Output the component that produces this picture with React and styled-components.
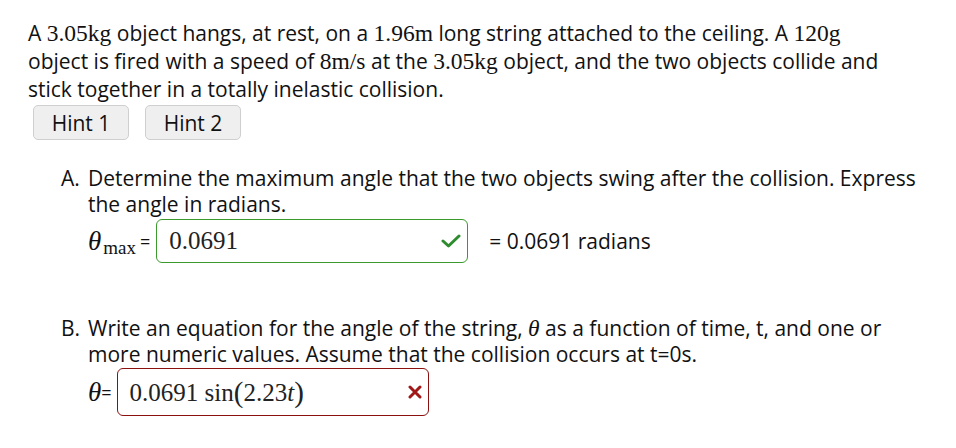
import React from "react";
import styled, { createGlobalStyle } from "styled-components";

const GlobalStyle = createGlobalStyle`
  body {
    margin: 0;
    background: #ffffff;
    color: #111;
    font-family: "Open Sans", "Liberation Sans", sans-serif;
  }
`;

const Page = styled.div`
  padding: 19px 28px 0 28px;
  width: 900px;
`;

const Problem = styled.p`
  margin: 0;
  width: 875px;
  font-size: 21px;
  line-height: 28px;
`;

const M = styled.span`
  font-family: "Liberation Serif", "DejaVu Serif", serif;
  font-size: 23.5px;
  font-style: ${(p) => (p.$italic ? "italic" : "normal")};
`;

const HintRow = styled.div`
  display: flex;
  gap: 16px;
  margin: 2px 0 0 5px;
`;

const HintButton = styled.button`
  width: 96px;
  height: 35px;
  background: #efefef;
  border: 1px solid #cfcfcf;
  border-radius: 5px;
  font-family: "Open Sans", "Liberation Sans", sans-serif;
  font-size: 21px;
  color: #111;
  padding: 0;
`;

const Part = styled.div`
  display: flex;
  margin: ${(p) => p.$top}px 0 0 33px;
  font-size: 21px;
  line-height: 26px;
`;

const PartLabel = styled.div`
  width: 27px;
  flex-shrink: 0;
`;

const PartBody = styled.div`
  flex: 1;
`;

const AnswerRow = styled.div`
  display: flex;
  align-items: center;
  margin-top: ${(p) => p.$top}px;
`;

const Theta = styled.span`
  font-family: "Liberation Serif", "DejaVu Serif", serif;
  font-style: italic;
  font-size: 27px;
  line-height: 1;
`;

const Sub = styled.span`
  font-family: "Liberation Serif", "DejaVu Serif", serif;
  font-size: 19px;
  position: relative;
  top: 7px;
  margin-left: 2px;
`;

const Eq = styled.span`
  font-size: 18px;
  margin: 0 ${(p) => p.$right}px 0 ${(p) => p.$left}px;
`;

const AnswerBox = styled.div`
  display: flex;
  align-items: center;
  justify-content: space-between;
  box-sizing: border-box;
  width: ${(p) => p.$w}px;
  height: ${(p) => p.$h}px;
  border: 1px solid ${(p) => p.$color};
  border-radius: 6px;
  padding: 0 6px 0 12px;
`;

const BoxValue = styled.span`
  font-family: "Liberation Serif", "DejaVu Serif", serif;
  font-size: 25px;
  color: #222;
`;

const Paren = styled.span`
  font-size: 29px;
  position: relative;
  top: 1px;
`;

const Units = styled.span`
  margin-left: 21px;
  font-size: 21px;
`;

function Check() {
  return (
    <svg width="20" height="14" viewBox="0 0 20 14">
      <path d="M2 7 L7.5 12 L18 2" fill="none" stroke="#2e8b2e" strokeWidth="3" strokeLinecap="round" strokeLinejoin="round" />
    </svg>
  );
}

function Cross() {
  return (
    <svg width="14" height="14" viewBox="0 0 14 14">
      <path d="M2 2 L12 12 M12 2 L2 12" stroke="#a01818" strokeWidth="3" strokeLinecap="round" />
    </svg>
  );
}

export default function App() {
  return (
    <Page>
      <GlobalStyle />
      <Problem>
        A <M>3.05kg</M> object hangs, at rest, on a <M>1.96m</M> long string attached to the
        ceiling. A <M>120g</M> object is fired with a speed of <M>8m/s</M> at the{" "}
        <M>3.05kg</M> object, and the two objects collide and stick together in a totally
        inelastic collision.
      </Problem>
      <HintRow>
        <HintButton>Hint 1</HintButton>
        <HintButton>Hint 2</HintButton>
      </HintRow>

      <Part $top={25}>
        <PartLabel>A.</PartLabel>
        <PartBody>
          Determine the maximum angle that the two objects swing after the collision.
          Express the angle in radians.
          <AnswerRow $top={2}>
            <Theta>θ</Theta>
            <Sub>max</Sub>
            <Eq $left={4} $right={6}>=</Eq>
            <AnswerBox $w={312} $h={44} $color="#3a9a2c">
              <BoxValue>0.0691</BoxValue>
              <Check />
            </AnswerBox>
            <Units>= 0.0691 radians</Units>
          </AnswerRow>
        </PartBody>
      </Part>

      <Part $top={52}>
        <PartLabel>B.</PartLabel>
        <PartBody>
          Write an equation for the angle of the string, <M $italic>θ</M> as a function of
          time, t, and one or more numeric values. Assume that the collision occurs at t=0s.
          <AnswerRow $top={1}>
            <Theta>θ</Theta>
            <Eq $left={0} $right={5}>=</Eq>
            <AnswerBox $w={312} $h={48} $color="#8b1010">
              <BoxValue>
                0.0691 sin<Paren>(</Paren>2.23<i>t</i>
                <Paren>)</Paren>
              </BoxValue>
              <Cross />
            </AnswerBox>
          </AnswerRow>
        </PartBody>
      </Part>
    </Page>
  );
}
